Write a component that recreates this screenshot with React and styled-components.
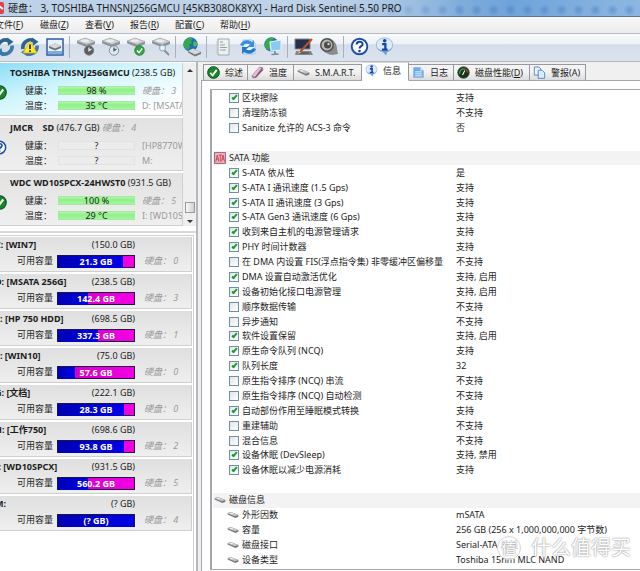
import React from 'react';
import styled, { createGlobalStyle, css } from 'styled-components';

const theme = {
    color: {
        text: '#1c1c1c',
        muted: '#9a9a9a',
        line: '#a3a6aa',
        face: '#f0f0f0',
        good: '#8ff088',
        free: '#e400d6',
    },
    font: '"Noto Sans", "Noto Sans CJK SC", sans-serif',
};

const GlobalStyle = createGlobalStyle`
    * {
        box-sizing: border-box;
    }

    body {
        background: ${theme.color.face};
        color: ${theme.color.text};
        font-family: ${theme.font};
        font-size: 9px;
        line-height: 14px;
        margin: 0;
        overflow: hidden;
    }

    button,
    input {
        color: inherit;
        font: inherit;
        margin: 0;
    }
`;

/* The window is dragged a little past the left edge of the screen. */
const Window = styled.div`
    display: flex;
    flex-direction: column;
    height: 100vh;
    margin-left: -8px;
    min-height: 560px;
`;

const TitleBar = styled.header`
    align-items: center;
    background: linear-gradient(90deg, #bdd1e8 0%, rgba(190, 210, 232, 0.9) 50%, transparent 72%),
        radial-gradient(circle, rgba(50, 110, 190, 0.35) 1px, transparent 6px) 0 2px / 17px 16px,
        linear-gradient(90deg, #b9cfe8 0%, #bed2e8 45%, #8fb6de 65%, #6fa3d8 80%, #8db7e2 100%);
    border-bottom: 1px solid #60758c;
    display: flex;
    flex: none;
    height: 17px;
    padding-bottom: 1px;
`;

const TitleText = styled.h1`
    font-size: 10px;
    font-weight: 400;
    margin: 0 0 0 4px;
    white-space: pre;
`;

const MenuBar = styled.nav`
    background: linear-gradient(#f8f8f8, #ededed);
    display: flex;
    flex: none;
    height: 16px;
    padding-left: 3px;
`;

const MenuButton = styled.button`
    background: none;
    border: 0;
    line-height: 16px;
    padding: 0;
    text-align: left;
    white-space: nowrap;
    width: 45px;
`;

const Toolbar = styled.div`
    align-items: center;
    background: linear-gradient(#f8fafc 0%, #eef2f7 35%, #d4dde9 40%, #dbe4ee 100%);
    border-bottom: 1px solid #b5b9be;
    border-top: 1px solid #b8bcc2;
    display: flex;
    flex: none;
    height: 29px;
    padding: 0 0 2px;
`;

const ToolButton = styled.button`
    background: none;
    border: 0;
    height: 20px;
    padding: 0;
    width: 25px;

    svg {
        display: block;
        margin: 0 auto;
    }
`;

const Separator = styled.span`
    background: #a9b0b9;
    height: 22px;
    margin: 0 3px 0 2px;
    width: 1px;
`;

const Main = styled.div`
    display: flex;
    flex: 1;
    min-height: 0;
`;

const Sidebar = styled.aside`
    background: #fff;
    border-right: 2px solid #b4b8bc;
    display: flex;
    flex: none;
    flex-direction: column;
    width: 206px;
`;

const DiskArea = styled.div`
    border-bottom: 2px solid #d9d9d9;
    display: flex;
    flex: none;
    padding: 1px 0 5px;
`;

const DiskList = styled.div`
    display: grid;
    flex: 1;
    gap: 2px;
    min-width: 0;
`;

const DiskCard = styled.article`
    background: ${props => (props.$selected ? 'linear-gradient(165deg, #8adcf8 0%, #d2f5fd 40%, #fff 85%)' : 'linear-gradient(#e2e2e2, #efefef)')};
    border: solid #cfcfcf;
    border-width: 0 1px 1px 0;
    display: grid;
    grid-template-columns: 16px 1fr;
    height: 53px;
    overflow: hidden;

    > svg {
        margin-top: 22px;
    }
`;

const DiskBody = styled.div`
    min-width: 0;
    padding-left: 2px;
    padding-top: 2px;
`;

const DiskName = styled.h2`
    font-size: 9px;
    font-weight: 700;
    line-height: 16px;
    margin: 0 0 2px;
    white-space: pre;

    span {
        font-weight: 400;
    }
`;

const Note = styled.span`
    color: ${theme.color.muted};
    font-style: ${props => (props.$plain ? 'normal' : 'italic')};
    font-weight: 400;
    white-space: nowrap;
`;

const Reading = styled.div`
    align-items: center;
    display: grid;
    grid-template-columns: 33px 77px 1fr;
    height: 15px;
    padding-left: 15px;
    white-space: nowrap;

    ${Note} {
        padding-left: 7px;
    }
`;

const Meter = styled.span`
    background: ${props => (props.$known ? `linear-gradient(#b4f7ae, ${theme.color.good} 40%, #a6f5a0)` : '#ececec')};
    border: 1px solid ${props => (props.$known ? '#a5e8a0' : '#e2e2e2')};
    height: 9px;
    line-height: 8px;
    text-align: center;
`;

const Scrollbar = styled.div`
    align-items: center;
    background: #efefef;
    display: flex;
    flex: none;
    flex-direction: column;
    justify-content: space-between;
    padding: 6px 0 3px 1px;
    width: 13px;
`;

const ScrollEnd = styled.div`
    align-items: center;
    display: flex;
    flex-direction: column;
    gap: 7px;
`;

const Arrow = styled.i`
    border: solid transparent;
    border-width: ${props => (props.$up ? '0 3px 3px' : '3px 3px 0')};
    border-bottom-color: ${props => (props.$up ? '#333' : 'transparent')};
    border-top-color: ${props => (props.$up ? 'transparent' : '#333')};
`;

const Thumb = styled.i`
    background: linear-gradient(90deg, #fafafa, #cfcfcf);
    border: 1px solid #9b9b9b;
    height: 11px;
    width: 10px;
`;

const VolumeList = styled.div`
    border: solid #cfcfcf;
    border-width: 1px 1px 0 0;
    display: flex;
    flex: 1;
    flex-direction: column;
    gap: 2px;
    margin-right: 2px;
    margin-top: 2px;
    min-height: 0;
    overflow: hidden;
    padding-right: 1px;
    padding-top: 1px;
`;

const VolumeCard = styled.article`
    align-items: center;
    background: linear-gradient(#dfdfdf, #efefef);
    border: solid #cfcfcf;
    border-width: 0 1px 1px 0;
    display: grid;
    flex: none;
    grid-template-columns: 62px 78px 1fr;
    grid-template-rows: 16px 16px;
    height: 35px;
    padding-left: 3px;
    white-space: nowrap;

    ${Note} {
        padding-left: 9px;
    }
`;

const VolumeHead = styled.div`
    display: flex;
    grid-column: 1 / 3;
    justify-content: space-between;
`;

const VolumeLabel = styled.span`
    padding-right: 4px;
    text-align: right;
`;

const Capacity = styled.span`
    background: linear-gradient(90deg, #c800c0, #f400e4);
    border: 1px solid #1c1640;
    color: #fff;
    display: grid;
    font-weight: 700;
    height: 13px;
    line-height: 12px;
    text-align: center;

    > * {
        grid-area: 1 / 1;
    }
`;

const Used = styled.i`
    background: linear-gradient(90deg, #0000b4, #0000ea);
`;

const Content = styled.main`
    display: flex;
    flex: 1;
    flex-direction: column;
    min-width: 0;
    padding-left: 3px;
`;

const Tabs = styled.div`
    align-items: flex-end;
    display: flex;
    flex: none;
    height: 19px;
    padding-left: 2px;
`;

const Tab = styled.button`
    align-items: center;
    background: linear-gradient(#f3f3f3 45%, #dcdcdc);
    border: 1px solid #98999c;
    border-bottom-color: ${theme.color.line};
    border-left-width: ${props => (props.$first ? '1px' : '0')};
    display: flex;
    gap: 5px;
    height: 17px;
    min-width: ${props => props.$width}px;
    padding: 0 3px;
    white-space: nowrap;

    svg {
        flex: none;
    }

    ${props =>
        props.$active &&
        css`
            background: #fff;
            border-bottom-color: #fff;
            border-top-color: #d6d6d6;
            height: 19px;
            padding-bottom: 2px;
        `}
`;

const Page = styled.section`
    background: #fff;
    border-left: 1px solid ${theme.color.line};
    border-top: 1px solid ${theme.color.line};
    display: flex;
    flex: 1;
    margin-top: -1px;
    min-height: 0;
    padding: 8px 0 1px 8px;
    position: relative;
    z-index: -1;
`;

const ListFrame = styled.div`
    border: solid ${theme.color.line};
    border-width: 1px 0 1px 2px;
    flex: 1;
    height: 100%;
    padding: 1px 0 2px 1px;
`;

const List = styled.table`
    border-collapse: collapse;
    height: 100%;
    table-layout: fixed;
    width: 100%;
`;

const NameColumn = styled.col`
    width: 243px;
`;

const Row = styled.tr`
    background: ${props => (props.$head ? '#f3f3f3' : 'none')};
`;

const Cell = styled.td`
    height: 14px;
    line-height: 14px;
    overflow: visible;
    padding: 0;
    text-align: left;
    white-space: nowrap;
`;

const SectionName = styled.th`
    font-weight: 400;
    height: 14px;
    padding: 0 0 0 1px;
    text-align: left;
    white-space: nowrap;
`;

const WithIcon = styled.span`
    align-items: center;
    display: flex;
    gap: 3px;
    padding-left: ${props => (props.$indent ? '14px' : '0')};
`;

const Option = styled.label`
    align-items: center;
    display: flex;
    gap: 3px;
    padding-left: 16px;
`;

const Check = styled.input`
    appearance: none;
    background: linear-gradient(135deg, #dfe6ec, #fff);
    border: 1px solid #6f8ea8;
    display: grid;
    flex: none;
    height: 10px;
    place-items: center;
    width: 10px;

    &:checked::after {
        border: solid #1f9a2e;
        border-width: 0 2px 2px 0;
        content: '';
        height: 4px;
        margin-bottom: 2px;
        transform: rotate(42deg);
        width: 1px;
    }
`;

const Watermark = styled.div`
    align-items: center;
    bottom: 9px;
    color: #fff;
    display: flex;
    font-size: 20px;
    gap: 10px;
    line-height: 28px;
    pointer-events: none;
    position: absolute;
    right: 9px;
    text-shadow: 0 0 2px #8f8f8f, 0 0 1px #b0b0b0;
`;

const Seal = styled.span`
    background: rgba(255, 255, 255, 0.75);
    border: 1px solid #d4d4d4;
    border-radius: 50%;
    font-size: 15px;
    height: 24px;
    line-height: 22px;
    text-align: center;
    width: 24px;
`;

const Icon = ({ size = 20, children }) => (
    <svg width={size} height={size} viewBox="0 0 20 20" fill="none" aria-hidden="true">
        {children}
    </svg>
);

const OkIcon = ({ size }) => (
    <Icon size={size}>
        <circle cx="10" cy="10" r="9" fill="#17882a" stroke="#0c4f18" strokeWidth="1.5" />
        <path d="M5 10.5l3.6 3.8L15 6" stroke="#fff" strokeWidth="2.8" />
    </Icon>
);

const HelpIcon = ({ size }) => (
    <Icon size={size}>
        <circle cx="10" cy="10" r="8.2" fill="#fff" stroke="#1c4fa8" strokeWidth="2" />
        <path d="M7 8c0-4 6.300-4 6.300-.5 0 2.200-3.200 2.200-3.200 4.700" stroke="#1845a0" strokeWidth="2.200" />
        <circle cx="10" cy="14.800" r="1.400" fill="#1845a0" />
    </Icon>
);

const InfoIcon = ({ size }) => (
    <Icon size={size}>
        <path d="M10 1c5 0 8.500 2.800 8.500 7.300 0 4-2.700 6.400-6 7.200L11.500 19l-3-3.500c-4-.6-7-3.200-7-7.200C1.500 3.800 5 1 10 1z" fill="#dcebf8" stroke="#9db8d3" />
        <path d="M2 11c3 4 12 5 16 0-1 3-3 4-5.500 4.500L11.500 19l-3-3.500C5 15 3 13.500 2 11z" fill="#6f9dcf" />
        <circle cx="10.200" cy="4" r="1.900" fill="#1644ae" />
        <path d="M7.500 7.500h3.400v5.500M7.300 13.200h6" stroke="#1644ae" strokeWidth="2.400" />
    </Icon>
);

const Refresh = () => (
    <>
        <path d="M3 12a7.500 7.500 0 0 1 11-8" stroke="#2c648f" strokeWidth="3.600" />
        <path d="M12 .5l6.500 4.300-5.500 4z" fill="#2c648f" />
        <path d="M17 8.500a7.500 7.500 0 0 1-11 7.600" stroke="#3b7ba8" strokeWidth="3.600" />
        <path d="M8 19.500l-7-4 5.500-4.500z" fill="#3b7ba8" />
    </>
);

const Drive = () => (
    <>
        <path d="M1 4l8-3 10 3.500V7l-8 3.200L1 6.300z" fill="#8e9193" />
        <path d="M1 4l8-3 10 3.500-8 3z" fill="#d0d3d5" stroke="#a4a7a9" strokeWidth=".6" />
        <ellipse cx="9" cy="3.800" rx="4" ry="1.300" fill="#eceeef" />
    </>
);

const SmallDrive = ({ size = 12 }) => (
    <Icon size={size}>
        <path d="M1 7l5-2 13 5v3l-5 2L1 9z" fill="#77797b" />
        <path d="M1 7l5-2 13 5-6 2z" fill="#c3c5c7" />
        <path d="M4 7.300l3-1 4 1.700-3 1z" fill="#eee" />
    </Icon>
);

const SataIcon = () => (
    <Icon size={12}>
        <rect x="1" y="1" width="18" height="18" fill="#f3b3b8" stroke="#8d5a88" strokeWidth="1.500" />
        <path d="M3 16l2.500-11L8 16M4 12h3M8 5h5M10.500 5v11M12.500 16L15 5l2.500 11M13.500 12h3" stroke="#c0394c" strokeWidth="1.400" />
    </Icon>
);

const WarnIcon = () => (
    <Icon>
        <Refresh />
        <path d="M10 4l7 12H3z" fill="#ffe920" stroke="#d0b000" strokeWidth=".7" />
        <path d="M10 7.500v4.500M10 13.300v1.600" stroke="#222" strokeWidth="1.700" />
    </Icon>
);

const PanelIcon = () => (
    <Icon>
        <rect x="2" y="2" width="16" height="16" fill="#e6f1fa" stroke="#305c9d" strokeWidth="1.500" />
        <path d="M3 14h14v3H3z" fill="#7aaee2" />
        <path d="M4 9l6-2.500L16 9v2l-6 2.500L4 11z" fill="#707376" />
        <path d="M4 9l6-2.500L16 9l-6 2.500z" fill="#d7d9db" />
    </Icon>
);

const ScanIcon = ({ color }) => (
    <Icon>
        <Drive />
        <circle cx="13" cy="13.500" r="4.700" fill={color} stroke="#777" strokeWidth=".8" />
        <path d="M13 10.500v3l2.500-1.500" stroke={color === '#5b5d5f' ? '#eee' : '#456'} strokeWidth="1.300" />
    </Icon>
);

const VerifyIcon = () => (
    <Icon>
        <Drive />
        <circle cx="13.500" cy="13.500" r="4.800" fill="#35a646" stroke="#1c7b2c" strokeWidth=".8" />
        <path d="M11 13.500l2 2.200 3.200-4.200" stroke="#fff" strokeWidth="1.500" />
    </Icon>
);

const SearchIcon = () => (
    <Icon>
        <Drive />
        <circle cx="11.500" cy="11" r="3" fill="#e4f3fb" stroke="#8aa3b5" />
        <path d="M13.500 13.500l4.500 4.500" stroke="#8a8c8e" strokeWidth="1.800" />
    </Icon>
);

const Globe = () => (
    <>
        <circle cx="8.500" cy="7.500" r="7.200" fill="#1e70b8" />
        <path d="M3 3.500C6 0 10 .5 11 1.500L9 4l1 2-3 1.500L8 10l-2 3C3 12 1 9 1.500 6.500z" fill="#37a94a" />
        <path d="M12 4l3 1.500v3l-2 1.500-2-2z" fill="#4cbb55" />
    </>
);

const GlobeIcon = () => (
    <Icon>
        <Globe />
        <path d="M6 14l5-2.500 8 3.500v2L13 19.500l-7-4z" fill="#75797c" />
        <path d="M6 14l5-2.500 8 3.500-6 2.500z" fill="#d6d9dc" />
    </Icon>
);

const ReportIcon = () => (
    <Icon>
        <path d="M5 2h11v16H5z" fill="#eef1f1" stroke="#a2a9aa" />
        <path d="M7 5h3M7 8h5M7 10.500h7M7 13h6" stroke="#9aa0a0" />
        <path d="M5 2l-1 3v12" stroke="#c6caca" />
    </Icon>
);

const SyncIcon = () => (
    <Icon>
        <path d="M5 3h9l3 3v11H5z" fill="#e9f4fd" stroke="#9fc4e6" />
        <path d="M2 8c2-5 8-6 12-3l2-2v7H9l3-2.500C9 6 6 7 5 9z" fill="#3990df" />
        <path d="M18 12c-2 5-8 6-12 3l-2 2v-7h7l-3 2.500c3 1.500 6 .5 7-1.500z" fill="#2379cc" />
    </Icon>
);

const NetworkIcon = () => (
    <Icon>
        <Globe />
        <path d="M7 5l11-2v10L8 14z" fill="#8cc9f1" stroke="#e4eef6" strokeWidth="1.200" />
        <path d="M12 14v3M8.500 17.500l7-.5" stroke="#6e8aa0" strokeWidth="1.600" />
    </Icon>
);

const ComputerIcon = () => (
    <Icon>
        <path d="M1 2h15v10H1z" fill="#25304a" stroke="#83858a" />
        <path d="M2 14h15l2 4H1z" fill="#84878a" />
        <path d="M4 16h11" stroke="#3b3d40" />
        <path d="M6 15L18 2" stroke="#b5532a" strokeWidth="2.200" />
        <path d="M4 17l1-3 2 1.500z" fill="#eec68b" />
    </Icon>
);

const SpeakerIcon = () => (
    <Icon>
        <path d="M7 2c6-2 11 4 11 10l1 5-6 1C6 17 1 12 1 7z" fill="#8c8c8a" />
        <circle cx="8" cy="8" r="6.200" fill="#b9b9b6" stroke="#51514f" strokeWidth="1.500" />
        <circle cx="8.500" cy="8" r="3.500" fill="#4b4b49" />
        <circle cx="9.500" cy="7" r="1.200" fill="#d0d0ce" />
    </Icon>
);

const PenIcon = () => (
    <Icon size={13}>
        <path d="M1 15L13 1l5 1 1 4L8 18l-5 1z" fill="#a06a92" />
        <path d="M2 15L13 2l3 1L6 17z" fill="#e6bfd9" />
        <path d="M6 18L17 6" stroke="#6d3c60" />
    </Icon>
);

const LogIcon = () => (
    <Icon size={13}>
        <path d="M2 2h11l5 5v11H2z" fill="#72acee" />
        <path d="M13 2v5h5z" fill="#d4e6fa" />
        <path d="M5 9h10M5 12h10M5 15h10" stroke="#fff" strokeWidth="1.200" />
    </Icon>
);

const GaugeIcon = () => (
    <Icon size={13}>
        <circle cx="10" cy="10" r="9" fill="#17351d" stroke="#4a5a4c" />
        <path d="M4 12a6.500 6.500 0 0 1 9-7" stroke="#34b24c" strokeWidth="2" />
        <path d="M13.500 5a6.500 6.500 0 0 1 3 5" stroke="#d63a2c" strokeWidth="2" />
        <path d="M8.500 14L12 7" stroke="#fff" strokeWidth="1.600" />
    </Icon>
);

const CopyIcon = () => (
    <Icon size={13}>
        <path d="M2 1.500h7l3 3V14H2z" fill="#edf5fd" stroke="#4a82c4" strokeWidth="1.400" />
        <path d="M8 6.500h6l4 4V19H8z" fill="#dcebfa" stroke="#4a82c4" strokeWidth="1.400" />
    </Icon>
);

const menus = [
    ['文件', 'F'],
    ['磁盘', 'Z'],
    ['查看', 'V'],
    ['报告', 'R'],
    ['配置', 'C'],
    ['帮助', 'H'],
];

const tools = [
    ['刷新', <Icon><Refresh /></Icon>],
    ['警告', <WarnIcon />],
    ['面板', <PanelIcon />],
    null,
    ['短测试', <ScanIcon color="#5b5d5f" />],
    ['长测试', <ScanIcon color="#dbe9f3" />],
    ['验证', <VerifyIcon />],
    ['查找', <SearchIcon />],
    null,
    ['在线', <GlobeIcon />],
    null,
    ['报告', <ReportIcon />],
    ['同步', <SyncIcon />],
    ['网络', <NetworkIcon />],
    null,
    ['显示', <ComputerIcon />],
    ['声音', <SpeakerIcon />],
    null,
    ['帮助', <HelpIcon size={19} />],
    ['关于', <InfoIcon size={19} />],
];

const disks = [
    { name: 'TOSHIBA THNSNJ256GMCU', size: '238.5 GB', health: '98 %', temp: '35 °C', index: 3, volume: 'D: [MSATA 256G]', selected: true },
    { name: 'JMCR    SD', size: '476.7 GB', index: 4, volume: 'M:', model: '[HP8770W]' },
    { name: 'WDC WD10SPCX-24HWST0', size: '931.5 GB', health: '100 %', temp: '29 °C', index: 5, volume: 'I: [WD10SPCX]' },
];

const volumes = [
    { name: 'C: [WIN7]', size: '150.0', free: '21.3 GB', used: 86, disk: 0 },
    { name: 'D: [MSATA 256G]', size: '238.5', free: '142.4 GB', used: 40, disk: 3 },
    { name: 'E: [HP 750 HDD]', size: '698.5', free: '337.3 GB', used: 52, disk: 1 },
    { name: 'F: [WIN10]', size: '75.0', free: '57.6 GB', used: 23, disk: 0 },
    { name: 'G: [文档]', size: '222.1', free: '28.3 GB', used: 87, disk: 0 },
    { name: 'H: [工作750]', size: '698.6', free: '93.8 GB', used: 87, disk: 2 },
    { name: 'I: [WD10SPCX]', size: '931.5', free: '560.2 GB', used: 40, disk: 5 },
    { name: 'M:', size: '?', free: '(? GB)', used: 100, disk: 4 },
];

const tabs = [
    { label: '综述', icon: <OkIcon size={13} />, width: 45 },
    { label: '温度', icon: <PenIcon />, width: 46 },
    { label: 'S.M.A.R.T.', icon: <SmallDrive size={13} />, width: 68 },
    { label: '信息', icon: <InfoIcon size={13} />, width: 47, active: true },
    { label: '日志', icon: <LogIcon />, width: 45 },
    { label: <>磁盘性能(<u>D</u>)</>, icon: <GaugeIcon />, width: 76 },
    { label: '警报(A)', icon: <CopyIcon />, width: 56 },
];

const security = [
    ['区块擦除', '支持', true],
    ['清理防冻锁', '不支持', false],
    ['Sanitize 允许的 ACS-3 命令', '否', false],
];

const sata = [
    ['S-ATA 依从性', '是', true],
    ['S-ATA I 通讯速度 (1.5 Gps)', '支持', true],
    ['S-ATA II 通讯速度 (3 Gps)', '支持', true],
    ['S-ATA Gen3 通讯速度 (6 Gps)', '支持', true],
    ['收到来自主机的电源管理请求', '支持', true],
    ['PHY 时间计数器', '支持', true],
    ['在 DMA 内设置 FIS(浮点指令集) 非零缓冲区偏移量', '不支持', false],
    ['DMA 设置自动激活优化', '支持, 启用', true],
    ['设备初始化接口电源管理', '支持, 启用', true],
    ['顺序数据传输', '不支持', false],
    ['异步通知', '不支持', false],
    ['软件设置保留', '支持, 启用', true],
    ['原生命令队列 (NCQ)', '支持', true],
    ['队列长度', '32', true],
    ['原生指令排序 (NCQ) 串流', '不支持', false],
    ['原生指令排序 (NCQ) 自动检测', '不支持', false],
    ['自动部份作用至睡眠模式转换', '支持', true],
    ['重建辅助', '不支持', false],
    ['混合信息', '不支持', false],
    ['设备休眠 (DevSleep)', '支持, 禁用', true],
    ['设备休眠以减少电源消耗', '支持', true],
];

const diskInfo = [
    ['外形因数', 'mSATA'],
    ['容量', '256 GB (256 x 1,000,000,000 字节数)'],
    ['磁盘接口', 'Serial-ATA 总线'],
    ['设备类型', 'Toshiba 15nm MLC NAND'],
];

const Disk = ({ disk }) => (
    <DiskCard $selected={disk.selected}>
        {disk.health ? <OkIcon size={15} /> : <HelpIcon size={15} />}
        <DiskBody>
            <DiskName>
                {disk.name} <span>({disk.size})</span>
                {!disk.health && <Note> 硬盘： {disk.index}</Note>}
            </DiskName>
            <Reading>
                <span>健康：</span>
                <Meter $known={disk.health}>{disk.health || '?'}</Meter>
                {disk.model ? <Note $plain>{disk.model}</Note> : <Note>硬盘： {disk.index}</Note>}
            </Reading>
            <Reading>
                <span>温度：</span>
                <Meter $known={disk.temp}>{disk.temp || '?'}</Meter>
                <Note $plain>{disk.volume}</Note>
            </Reading>
        </DiskBody>
    </DiskCard>
);

const Volume = ({ volume }) => (
    <VolumeCard>
        <VolumeHead>
            <b>{volume.name}</b>
            <span>({volume.size} GB)</span>
        </VolumeHead>
        <span />
        <VolumeLabel>可用容量</VolumeLabel>
        <Capacity>
            <Used style={{ width: `${volume.used}%` }} />
            <span>{volume.free}</span>
        </Capacity>
        <Note>硬盘： {volume.disk}</Note>
    </VolumeCard>
);

const OptionRow = ({ id, name, value, checked }) => (
    <Row>
        <Cell>
            <Option htmlFor={id}>
                <Check type="checkbox" id={id} defaultChecked={checked} />
                {name}
            </Option>
        </Cell>
        <Cell>{value}</Cell>
    </Row>
);

const SectionRow = ({ icon, children }) => (
    <Row $head>
        <SectionName colSpan={2} scope="colgroup">
            <WithIcon>
                {icon}
                {children}
            </WithIcon>
        </SectionName>
    </Row>
);

const BlankRow = () => (
    <Row>
        <Cell colSpan={2} />
    </Row>
);

const App = () => (
    <>
        <GlobalStyle />
        <Window>
            <TitleBar>
                <svg width="12" height="12" viewBox="0 0 12 12" aria-hidden="true">
                    <rect width="12" height="12" rx="2" fill="#e5414a" />
                    <path d="M3 8l4-4 4 3" stroke="#fff" strokeWidth="2" fill="none" />
                </svg>
                <TitleText>硬盘： 3, TOSHIBA THNSNJ256GMCU [45KB308OK8YX] - Hard Disk Sentinel 5.50 PRO</TitleText>
            </TitleBar>
            <MenuBar>
                {menus.map(([label, key]) => (
                    <MenuButton key={key}>
                        {label}(<u>{key}</u>)
                    </MenuButton>
                ))}
            </MenuBar>
            <Toolbar>
                {tools.map((tool, i) =>
                    tool ? (
                        <ToolButton key={i} aria-label={tool[0]}>
                            {tool[1]}
                        </ToolButton>
                    ) : (
                        <Separator key={i} />
                    )
                )}
            </Toolbar>
            <Main>
                <Sidebar>
                    <DiskArea>
                        <DiskList>
                            {disks.map(disk => (
                                <Disk key={disk.name} disk={disk} />
                            ))}
                        </DiskList>
                        <Scrollbar>
                            <Arrow $up />
                            <ScrollEnd>
                                <Thumb />
                                <Arrow />
                            </ScrollEnd>
                        </Scrollbar>
                    </DiskArea>
                    <VolumeList>
                        {volumes.map(volume => (
                            <Volume key={volume.name} volume={volume} />
                        ))}
                    </VolumeList>
                </Sidebar>
                <Content>
                    <Tabs role="tablist">
                        {tabs.map((tab, i) => (
                            <Tab key={i} role="tab" aria-selected={!!tab.active} $active={tab.active} $first={i === 0} $width={tab.width}>
                                {tab.icon}
                                <span>{tab.label}</span>
                            </Tab>
                        ))}
                    </Tabs>
                    <Page>
                        <ListFrame>
                            <List>
                                <colgroup>
                                    <NameColumn />
                                    <col />
                                </colgroup>
                                <tbody>
                                    {security.map(([name, value, checked], i) => (
                                        <OptionRow key={name} id={`security-${i}`} name={name} value={value} checked={checked} />
                                    ))}
                                    <BlankRow />
                                    <SectionRow icon={<SataIcon />}>SATA 功能</SectionRow>
                                    {sata.map(([name, value, checked], i) => (
                                        <OptionRow key={name} id={`sata-${i}`} name={name} value={value} checked={checked} />
                                    ))}
                                    <BlankRow />
                                    <SectionRow icon={<SmallDrive />}>磁盘信息</SectionRow>
                                    {diskInfo.map(([name, value]) => (
                                        <Row key={name}>
                                            <Cell>
                                                <WithIcon $indent>
                                                    <SmallDrive />
                                                    {name}
                                                </WithIcon>
                                            </Cell>
                                            <Cell>{value}</Cell>
                                        </Row>
                                    ))}
                                </tbody>
                            </List>
                        </ListFrame>
                        <Watermark>
                            <Seal>值</Seal>
                            <span>什么值得买</span>
                        </Watermark>
                    </Page>
                </Content>
            </Main>
        </Window>
    </>
);

export default App;
